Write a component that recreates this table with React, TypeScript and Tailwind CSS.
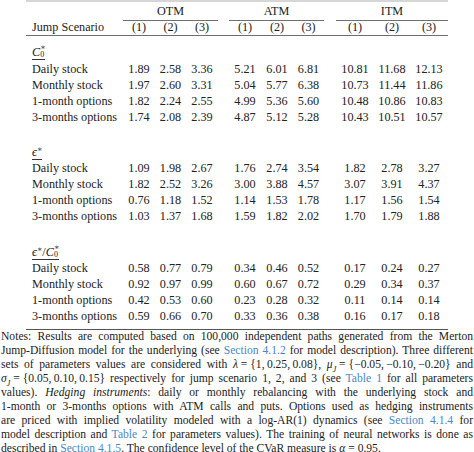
const grid =
  "grid grid-cols-[97px_32px_31px_32px_11px_32px_32px_31px_12px_38px_36px_38px]";

type Row = { label: string; v: string[] };

// C with ∗ above-right and 0 below-right, as in C_0^*
const C0 = () => (
  <>
    <span className="italic">C</span>
    <span className="relative inline-block w-[5px] h-[10px] text-[8px] leading-none">
      <span className="absolute left-0 top-[-2px]">∗</span>
      <span className="absolute left-0 top-[5px]">0</span>
    </span>
  </>
);

const Eps = () => (
  <>
    <span className="italic">ϵ</span>
    <span className="relative top-[-4px] text-[8px] leading-none">∗</span>
  </>
);

const sections: { label: React.ReactNode; pad: string; rows: Row[] }[] = [
  {
    label: <C0 />,
    pad: "h-[25px] pt-[7px]",
    rows: [
      { label: "Daily stock", v: ["1.89", "2.58", "3.36", "5.21", "6.01", "6.81", "10.81", "11.68", "12.13"] },
      { label: "Monthly stock", v: ["1.97", "2.60", "3.31", "5.04", "5.77", "6.38", "10.73", "11.44", "11.86"] },
      { label: "1-month options", v: ["1.82", "2.24", "2.55", "4.99", "5.36", "5.60", "10.48", "10.86", "10.83"] },
      { label: "3-months options", v: ["1.74", "2.08", "2.39", "4.87", "5.12", "5.28", "10.43", "10.51", "10.57"] },
    ],
  },
  {
    label: <Eps />,
    pad: "h-[35px] pt-[18px]",
    rows: [
      { label: "Daily stock", v: ["1.09", "1.98", "2.67", "1.76", "2.74", "3.54", "1.82", "2.78", "3.27"] },
      { label: "Monthly stock", v: ["1.82", "2.52", "3.26", "3.00", "3.88", "4.57", "3.07", "3.91", "4.37"] },
      { label: "1-month options", v: ["0.76", "1.18", "1.52", "1.14", "1.53", "1.78", "1.17", "1.56", "1.54"] },
      { label: "3-months options", v: ["1.03", "1.37", "1.68", "1.59", "1.82", "2.02", "1.70", "1.79", "1.88"] },
    ],
  },
  {
    label: (
      <>
        <Eps />
        <span>/</span>
        <C0 />
      </>
    ),
    pad: "h-[36px] pt-[19px]",
    rows: [
      { label: "Daily stock", v: ["0.58", "0.77", "0.79", "0.34", "0.46", "0.52", "0.17", "0.24", "0.27"] },
      { label: "Monthly stock", v: ["0.92", "0.97", "0.99", "0.60", "0.67", "0.72", "0.29", "0.34", "0.37"] },
      { label: "1-month options", v: ["0.42", "0.53", "0.60", "0.23", "0.28", "0.32", "0.11", "0.14", "0.14"] },
      { label: "3-months options", v: ["0.59", "0.66", "0.70", "0.33", "0.36", "0.38", "0.16", "0.17", "0.18"] },
    ],
  },
];

function DataRow({ row }: { row: Row }) {
  const cells: React.ReactNode[] = [];
  row.v.forEach((x, i) => {
    if (i === 3 || i === 6) cells.push(<span key={`g${i}`} />);
    cells.push(
      <span key={i} className="text-center">
        {x}
      </span>,
    );
  });
  return (
    <div className={`${grid} h-4 items-center leading-4`}>
      <span className="pl-[6px] whitespace-nowrap">{row.label}</span>
      {cells}
    </div>
  );
}

const Link = ({ children }: { children: React.ReactNode }) => (
  <span className="text-[#4b87c4]">{children}</span>
);

const Math = ({ children }: { children: React.ReactNode }) => (
  <span className="inline-block">{children}</span>
);

const J = () => <sub className="text-[8px] italic align-[-2px]">J</sub>;

const line = "text-justify [text-align-last:justify] whitespace-nowrap";

export default function App() {
  return (
    <div className="w-[474px] h-[452px] overflow-hidden bg-white text-[12.2px] text-[#222] font-['Liberation_Serif','DejaVu_Serif',serif]">
      <div className="ml-[26px] w-[422px]">
        <div className="h-[2px] bg-[#d6d6d6]" />

        <div className={`${grid} h-[18px]`}>
          <span />
          <span className="col-span-3 flex items-center justify-center border-b border-[#6f6f6f]">OTM</span>
          <span />
          <span className="col-span-3 flex items-center justify-center border-b border-[#6f6f6f]">ATM</span>
          <span />
          <span className="col-span-3 flex items-center justify-center border-b border-[#6f6f6f]">ITM</span>
        </div>

        <div className={`${grid} h-4 items-center border-b border-[#6f6f6f] leading-[15px]`}>
          <span className="pl-[6px] whitespace-nowrap">Jump Scenario</span>
          <span className="text-center">(1)</span>
          <span className="text-center">(2)</span>
          <span className="text-center">(3)</span>
          <span />
          <span className="text-center">(1)</span>
          <span className="text-center">(2)</span>
          <span className="text-center">(3)</span>
          <span />
          <span className="text-center">(1)</span>
          <span className="text-center">(2)</span>
          <span className="text-center">(3)</span>
        </div>

        {sections.map((s, i) => (
          <div key={i}>
            <div className={`${s.pad} pl-[6px]`}>
              <span className="inline-block border-b border-[#333] leading-[14px]">{s.label}</span>
            </div>
            {s.rows.map((r) => (
              <DataRow key={r.label} row={r} />
            ))}
          </div>
        ))}

        <div className="mt-[5px] h-px bg-[#555]" />
      </div>

      <div className="px-[1px] text-[11.6px] leading-[14px]">
        <div className={line}>
          Notes: Results are computed based on 100,000 independent paths generated from the Merton
        </div>
        <div className={line}>
          Jump-Diffusion model for the underlying (see <Link>Section 4.1.2</Link> for model description). Three different
        </div>
        <div className={line}>
          sets of parameters values are considered with{" "}
          <Math>
            <span className="italic">λ</span> = {"{"}1,&#8201;0.25,&#8201;0.08{"}"}
          </Math>
          ,{" "}
          <Math>
            <span className="italic">μ</span>
            <J /> = {"{"}−0.05,&#8201;−0.10,&#8201;−0.20{"}"}
          </Math>{" "}
          and
        </div>
        <div className={line}>
          <Math>
            <span className="italic">σ</span>
            <J /> = {"{"}0.05,&#8201;0.10,&#8201;0.15{"}"}
          </Math>{" "}
          respectively for jump scenario 1, 2, and 3 (see <Link>Table 1</Link> for all parameters
        </div>
        <div className={line}>
          values). <span className="italic">Hedging instruments</span>: daily or monthly rebalancing with the underlying stock and
        </div>
        <div className={line}>
          1-month or 3-months options with ATM calls and puts. Options used as hedging instruments
        </div>
        <div className={line}>
          are priced with implied volatility modeled with a log-AR(1) dynamics (see <Link>Section 4.1.4</Link> for
        </div>
        <div className={line}>
          model description and <Link>Table 2</Link> for parameters values). The training of neural networks is done as
        </div>
        <div className="whitespace-nowrap">
          described in <Link>Section 4.1.5</Link>. The confidence level of the CVaR measure is{" "}
          <Math>
            <span className="italic">α</span> = 0.95
          </Math>
          .
        </div>
      </div>
    </div>
  );
}
